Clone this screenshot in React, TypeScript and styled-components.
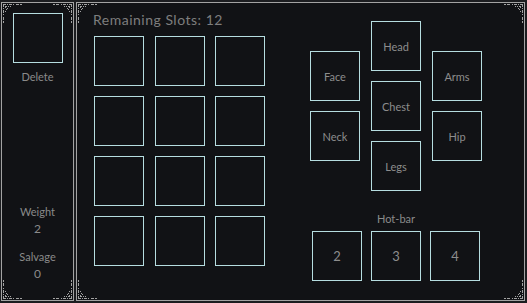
import React from "react";
import styled, { createGlobalStyle } from "styled-components";

const Global = createGlobalStyle`
  html, body { margin: 0; padding: 0; background: #1c1d20; }
  body { font-family: "Lato", "Noto Sans", sans-serif; }
`;

const Screen = styled.div`
  width: 527px;
  height: 303px;
  box-sizing: border-box;
  padding: 2px 0 0 1px;
  display: flex;
  gap: 2px;
  background: #1c1d20;
  overflow: hidden;
`;

const Panel = styled.div<{ $w: number }>`
  position: relative;
  width: ${(p) => p.$w}px;
  height: 299px;
  box-sizing: border-box;
  border: 1px solid #a3a3a3;
  background: #111215;
  display: flex;
`;

const SideColumn = styled.div`
  flex: 1;
  display: flex;
  flex-direction: column;
  align-items: center;
  padding: 10px 0 19px;
`;

const Slot = styled.div<{ $size?: number }>`
  width: ${(p) => p.$size ?? 50}px;
  height: ${(p) => p.$size ?? 50}px;
  box-sizing: border-box;
  border: 1px solid #b6dde0;
  display: flex;
  align-items: center;
  justify-content: center;
  color: #8d8d8d;
  font-size: 11px;
`;

const Label = styled.div<{ $size?: number }>`
  color: #8a8a8a;
  font-size: ${(p) => p.$size ?? 11}px;
  line-height: 14px;
  text-align: center;
`;

const DeleteLabel = styled(Label)`
  margin-top: 7px;
`;

const Spacer = styled.div`
  flex: 1;
`;

const Stat = styled.div`
  display: flex;
  flex-direction: column;
  align-items: center;
  gap: 3px;
  & + & {
    margin-top: 14px;
  }
`;

const StatValue = styled.div`
  color: #8a8a8a;
  font-size: 12px;
  line-height: 14px;
`;

const InventoryColumn = styled.div`
  display: flex;
  flex-direction: column;
  padding: 8px 0 0 16px;
`;

const Title = styled.div`
  color: #7e7e7e;
  font-size: 14px;
  letter-spacing: 0.5px;
  line-height: 18px;
  white-space: nowrap;
`;

const InvGrid = styled.div`
  margin: 7px 0 0 1px;
  display: grid;
  grid-template-columns: repeat(3, 50px);
  column-gap: 10.5px;
  row-gap: 10px;
`;

const GearColumn = styled.div`
  display: flex;
  flex-direction: column;
  align-items: center;
  padding: 18px 0 0 45px;
`;

const GearGrid = styled.div`
  display: grid;
  grid-template-columns: repeat(3, 50px);
  grid-template-rows: repeat(6, 20px);
  column-gap: 11px;
  row-gap: 10px;
`;

const GearSlot = styled(Slot)<{ $col: number; $row: number }>`
  grid-column: ${(p) => p.$col};
  grid-row: ${(p) => p.$row} / span 2;
`;

const HotbarTitle = styled(Label)`
  margin-top: 21px;
  font-size: 11px;
`;

const Hotbar = styled.div`
  margin-top: 5px;
  display: flex;
  gap: 9px;
`;

const HotSlot = styled(Slot)`
  font-size: 13px;
`;

const CornerBox = styled.svg<{ $v: "top" | "bottom"; $h: "left" | "right" }>`
  position: absolute;
  width: 20px;
  height: 20px;
  ${(p) => p.$v}: 1px;
  ${(p) => p.$h}: 1px;
  transform: scale(${(p) => (p.$h === "right" ? -1 : 1)}, ${(p) => (p.$v === "bottom" ? -1 : 1)});
  shape-rendering: crispEdges;
  pointer-events: none;
`;

const dots: [number, number, number, number][] = [
  [0, 0, 3, 1], [4, 0, 1, 1], [6, 0, 3, 1], [10, 0, 1, 1], [13, 0, 3, 1], [17, 0, 2, 1],
  [0, 1, 1, 2], [0, 4, 1, 1], [0, 6, 1, 3], [0, 10, 1, 1], [0, 13, 1, 3], [0, 17, 1, 2],
  [2, 2, 2, 1], [2, 3, 1, 1], [5, 2, 1, 1], [3, 5, 1, 1], [7, 2, 1, 1], [2, 7, 1, 1], [4, 4, 1, 1],
];

const Corner = ({ v, h }: { v: "top" | "bottom"; h: "left" | "right" }) => (
  <CornerBox $v={v} $h={h} viewBox="0 0 20 20">
    {dots.map(([x, y, w, hh], i) => (
      <rect key={i} x={x} y={y} width={w} height={hh} fill="#a3a3a3" />
    ))}
  </CornerBox>
);

const Corners = () => (
  <>
    <Corner v="top" h="left" />
    <Corner v="top" h="right" />
    <Corner v="bottom" h="left" />
    <Corner v="bottom" h="right" />
  </>
);

const gear = [
  { name: "Head", col: 2, row: 1 },
  { name: "Face", col: 1, row: 2 },
  { name: "Arms", col: 3, row: 2 },
  { name: "Chest", col: 2, row: 3 },
  { name: "Neck", col: 1, row: 4 },
  { name: "Hip", col: 3, row: 4 },
  { name: "Legs", col: 2, row: 5 },
];

export default function App() {
  return (
    <>
      <Global />
      <Screen>
        <Panel $w={73}>
          <Corners />
          <SideColumn>
            <Slot />
            <DeleteLabel>Delete</DeleteLabel>
            <Spacer />
            <Stat>
              <Label>Weight</Label>
              <StatValue>2</StatValue>
            </Stat>
            <Stat>
              <Label>Salvage</Label>
              <StatValue>0</StatValue>
            </Stat>
          </SideColumn>
        </Panel>
        <Panel $w={449}>
          <Corners />
          <InventoryColumn>
            <Title>Remaining Slots: 12</Title>
            <InvGrid>
              {Array.from({ length: 12 }).map((_, i) => (
                <Slot key={i} />
              ))}
            </InvGrid>
          </InventoryColumn>
          <GearColumn>
            <GearGrid>
              {gear.map((g) => (
                <GearSlot key={g.name} $col={g.col} $row={g.row}>
                  {g.name}
                </GearSlot>
              ))}
            </GearGrid>
            <HotbarTitle>Hot-bar</HotbarTitle>
            <Hotbar>
              {["2", "3", "4"].map((n) => (
                <HotSlot key={n}>{n}</HotSlot>
              ))}
            </Hotbar>
          </GearColumn>
        </Panel>
      </Screen>
    </>
  );
}
